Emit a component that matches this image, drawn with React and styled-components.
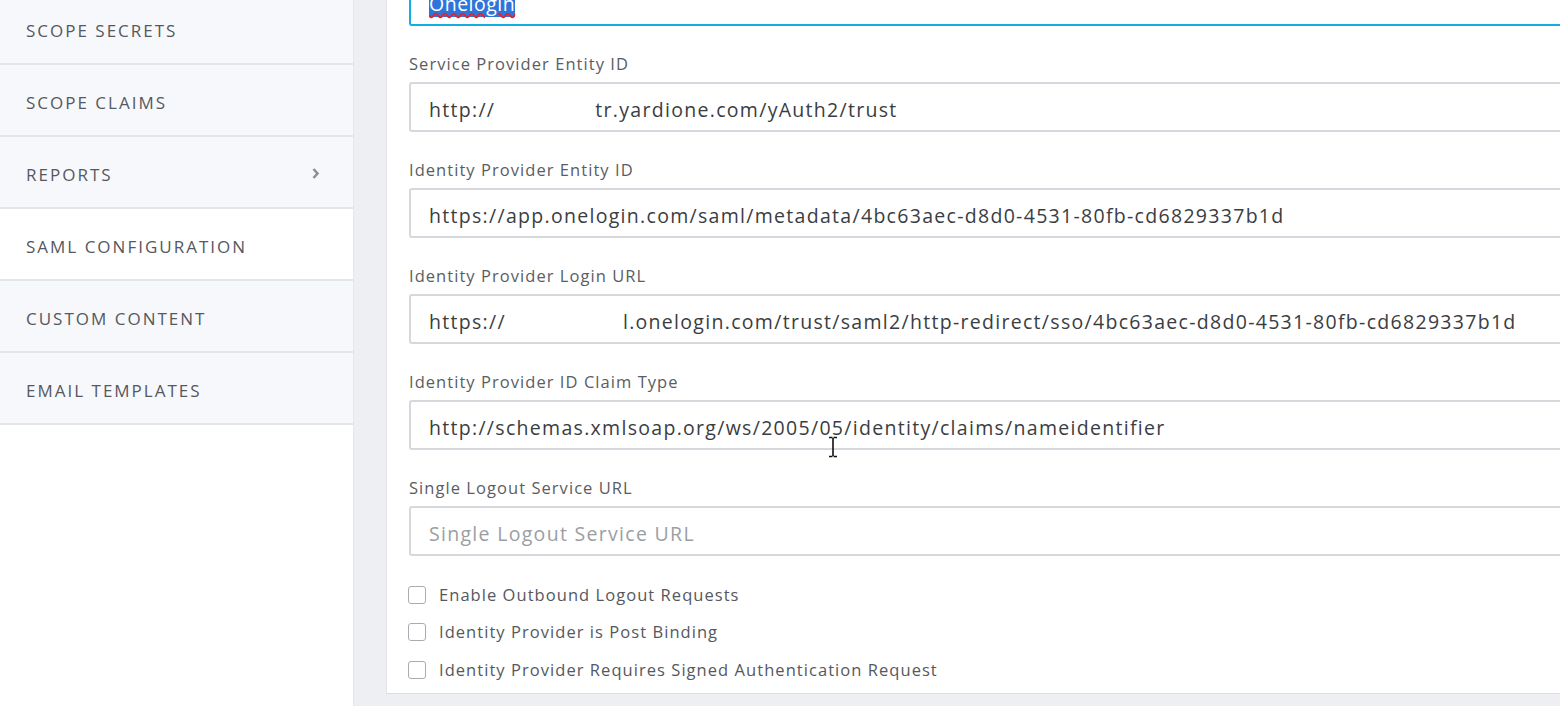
import React from 'react'
import styled, { createGlobalStyle } from 'styled-components'

const GlobalStyle = createGlobalStyle`
    html, body {
        margin: 0;
        padding: 0;
        overflow: hidden;
        background: #ffffff;
    }
    body {
        font-family: "Open Sans", "Noto Sans", sans-serif;
    }
`

const Page = styled.div`
    display: flex;
    width: 1560px;
    height: 706px;
    overflow: hidden;
`

const Sidebar = styled.nav`
    width: 354px;
    flex-shrink: 0;
    background: #ffffff;
    border-right: 1px solid #e4e6ea;
    box-sizing: border-box;
`

const NavList = styled.div`
    margin-top: -7px;
    display: flex;
    flex-direction: column;
`

const NavItem = styled.div`
    height: 66px;
    box-sizing: content-box;
    border-bottom: 2px solid #e3e5e9;
    background: ${(p) => (p.active ? '#ffffff' : '#f7f8fb')};
    display: flex;
    align-items: center;
    justify-content: space-between;
    padding: 4px 33px 0 26px;
    font-size: 17px;
    letter-spacing: 2px;
    text-transform: uppercase;
    color: #55585e;
`

const Chevron = styled.svg`
    width: 9px;
    height: 13px;
    margin-top: -2px;
`

const Main = styled.div`
    flex: 1;
    background: #eeeff3;
    padding: 0 0 12px 32px;
    display: flex;
`

const Panel = styled.div`
    position: relative;
    flex: 1;
    background: #ffffff;
    border-left: 1px solid #e2e4e8;
    border-bottom: 1px solid #dcdee3;
    padding-left: 22px;
`

const Form = styled.div`
    margin-top: -24px;
`

const Group = styled.div`
    margin-bottom: 27px;
`

const Label = styled.div`
    height: 20px;
    line-height: 20px;
    padding-top: 1px;
    margin-bottom: 8px;
    font-size: 16.5px;
    letter-spacing: 1.05px;
    color: #5a5d63;
`

const Field = styled.div`
    height: 50px;
    box-sizing: border-box;
    border: 2px solid ${(p) => (p.focused ? '#13aee0' : '#d5d8dc')};
    border-right: none;
    border-radius: 3px 0 0 3px;
    display: flex;
    align-items: center;
    padding: 4px 0 0 18px;
    font-size: 19.5px;
    letter-spacing: 1.3px;
    white-space: nowrap;
    color: ${(p) => (p.placeholder ? '#9b9ea3' : '#3a3d42')};
`

const Selected = styled.span`
    background: #2f74d9;
    color: #ffffff;
    letter-spacing: 0.5px;
    text-decoration: underline wavy #e0242e;
    text-underline-offset: 2px;
`

const Redacted = styled.span`
    display: inline-block;
    width: ${(p) => p.w}px;
`

const Checks = styled.div`
    margin-top: -9px;
`

const CheckRow = styled.label`
    height: 37.5px;
    display: flex;
    align-items: center;
    gap: 13px;
    font-size: 16.5px;
    letter-spacing: 1.05px;
    color: #55585e;
`

const CheckText = styled.span`
    padding-top: 3px;
`

const Box = styled.span`
    width: 18px;
    height: 18px;
    box-sizing: border-box;
    border: 1px solid #a8acb2;
    border-radius: 3px;
    background: #ffffff;
    margin: 4px 0 0 -1px;
`

const Cursor = styled.svg`
    position: absolute;
    left: 440px;
    top: 436px;
    width: 12px;
    height: 22px;
`

const navItems = [
    { label: 'Scope Secrets' },
    { label: 'Scope Claims' },
    { label: 'Reports', chevron: true },
    { label: 'SAML Configuration', active: true },
    { label: 'Custom Content' },
    { label: 'Email Templates' },
]

const checks = [
    'Enable Outbound Logout Requests',
    'Identity Provider is Post Binding',
    'Identity Provider Requires Signed Authentication Request',
]

const App = () => {
    return (
        <>
            <GlobalStyle />
            <Page>
                <Sidebar>
                    <NavList>
                        {navItems.map((item) => (
                            <NavItem key={item.label} active={item.active}>
                                {item.label}
                                {item.chevron && (
                                    <Chevron viewBox="0 0 9 13">
                                        <path
                                            d="M2.5 2l4 4.5-4 4.5"
                                            fill="none"
                                            stroke="#8c8f95"
                                            strokeWidth="2.6"
                                        />
                                    </Chevron>
                                )}
                            </NavItem>
                        ))}
                    </NavList>
                </Sidebar>
                <Main>
                    <Panel>
                        <Form>
                            <Group>
                                <Field focused>
                                    <Selected>Onelogin</Selected>
                                </Field>
                            </Group>
                            <Group>
                                <Label>Service Provider Entity ID</Label>
                                <Field>
                                    http://<Redacted w={100} />
                                    tr.yardione.com/yAuth2/trust
                                </Field>
                            </Group>
                            <Group>
                                <Label>Identity Provider Entity ID</Label>
                                <Field>
                                    https://app.onelogin.com/saml/metadata/4bc63aec-d8d0-4531-80fb-cd6829337b1d
                                </Field>
                            </Group>
                            <Group>
                                <Label>Identity Provider Login URL</Label>
                                <Field>
                                    https://<Redacted w={117} />
                                    l.onelogin.com/trust/saml2/http-redirect/sso/4bc63aec-d8d0-4531-80fb-cd6829337b1d
                                </Field>
                            </Group>
                            <Group>
                                <Label>Identity Provider ID Claim Type</Label>
                                <Field>
                                    http://schemas.xmlsoap.org/ws/2005/05/identity/claims/nameidentifier
                                </Field>
                            </Group>
                            <Group>
                                <Label>Single Logout Service URL</Label>
                                <Field placeholder>Single Logout Service URL</Field>
                            </Group>
                        </Form>
                        <Checks>
                            {checks.map((c) => (
                                <CheckRow key={c}>
                                    <Box />
                                    <CheckText>{c}</CheckText>
                                </CheckRow>
                            ))}
                        </Checks>
                        <Cursor viewBox="0 0 12 22">
                            <path
                                d="M2 1.5h3.5M6.5 1.5h3.5M6 2v18M2 20.5h3.5M6.5 20.5h3.5"
                                stroke="#111"
                                strokeWidth="1.6"
                                fill="none"
                            />
                        </Cursor>
                    </Panel>
                </Main>
            </Page>
        </>
    )
}

export default App
